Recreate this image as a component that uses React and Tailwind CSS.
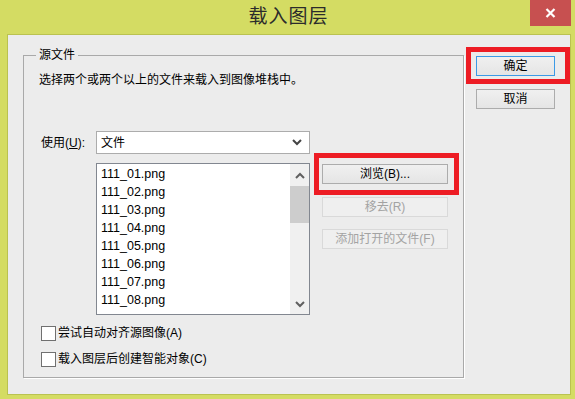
import React from 'react'

const font = "font-['Liberation_Sans','Noto_Sans_CJK_SC',sans-serif]"

function Chevron({ up = false, className = '' }) {
    return (
        <svg width="10" height="7" viewBox="0 0 10 7" className={className}>
            <path d={up ? 'M1 6 L5 2 L9 6' : 'M1 1 L5 5 L9 1'} fill="none" stroke="currentColor" strokeWidth="2" />
        </svg>
    )
}

function Button({ children, disabled = false, primary = false, className = '' }) {
    let tone = 'border-[#acacac] bg-gradient-to-b from-[#f0f0f0] to-[#e5e5e5] text-black'
    if (primary) tone = 'border-[#3c9ae6] bg-gradient-to-b from-[#f0f0f0] to-[#e5e5e5] text-black'
    if (disabled) tone = 'border-[#d9d9d9] bg-[#efefef] text-[#a3a3a3]'
    return (
        <div className={`relative w-[126px] h-[20px] border flex items-center justify-center text-[12px] leading-[14px] ${tone} ${className}`}>
            {children}
        </div>
    )
}

function Check({ children }) {
    return (
        <div className="flex items-center gap-[2px] ml-[2px] h-[15px]">
            <div className="w-[15px] h-[15px] border border-[#707070] bg-white" />
            <span className="text-[12px] leading-[15px] text-black">{children}</span>
        </div>
    )
}

const files = ['111_01.png', '111_02.png', '111_03.png', '111_04.png', '111_05.png', '111_06.png', '111_07.png', '111_08.png']

export default function App() {
    return (
        <div className={`w-[575px] h-[399px] bg-[#d4dc63] flex flex-col ${font}`}>
            {/* Title bar */}
            <div className="h-[34px] relative flex items-center justify-center">
                <span className="text-[19px] leading-[22px] text-[#2b2b2b] tracking-[1px] ml-[2px]">载入图层</span>
                <div className="absolute right-[4px] top-0 w-[41px] h-[26px] bg-[#c75050] flex items-center justify-center">
                    <svg width="11" height="10" viewBox="0 0 11 10">
                        <path d="M1.5 1 L9.5 9 M9.5 1 L1.5 9" stroke="white" strokeWidth="2.2" />
                    </svg>
                </div>
            </div>

            {/* Client */}
            <div className="flex-1 ml-[7px] mr-[4px] mb-[4px] bg-[#ececec] border border-[#bac250] flex pl-[15px] pt-[20px]">
                {/* Group box */}
                <div className="relative w-[441px] h-[323px] border border-[#a9a9a9] shadow-[1px_1px_0_#ffffff] pl-[15px] flex flex-col">
                    <span className="absolute -top-[8px] left-[12px] px-[3px] bg-[#ececec] text-[12px] leading-[14px] text-black">源文件</span>

                    <p className="mt-[16px] text-[12px] leading-[16px] text-black">选择两个或两个以上的文件来载入到图像堆栈中。</p>

                    <div className="mt-[43px] flex items-center">
                        <span className="w-[55px] ml-[2px] text-[12px] leading-[14px] text-black">使用(<span className="underline">U</span>):</span>
                        <div className="w-[214px] h-[23px] border border-[#acacac] bg-white flex items-center justify-between pl-[4px] pr-[7px]">
                            <span className="text-[12px] leading-[14px] text-black">文件</span>
                            <Chevron className="text-[#444]" />
                        </div>
                    </div>

                    <div className="mt-[9px] flex">
                        <div className="ml-[57px] w-[214px] h-[152px] border border-[#828790] bg-white flex">
                            <div className="flex-1 pt-[1px] pl-[4px]">
                                {files.map((f) => (
                                    <div key={f} className="h-[18px] flex items-center text-[12.5px] text-black">{f}</div>
                                ))}
                            </div>
                            <div className="w-[19px] bg-[#f0f0f0] flex flex-col items-center">
                                <div className="h-[22px] flex items-center justify-center text-[#606060]"><Chevron up /></div>
                                <div className="w-full h-[37px] bg-[#cdcdcd]" />
                                <div className="flex-1" />
                                <div className="h-[20px] flex items-center justify-center text-[#606060]"><Chevron /></div>
                            </div>
                        </div>

                        <div className="ml-[12px] mt-[1px] flex flex-col gap-[13px]">
                            <Button>
                                浏览(B)...
                                <div className="absolute -left-[9px] -right-[12px] -top-[12px] -bottom-[12px] border-[5px] border-[#ed1c24]" />
                            </Button>
                            <Button disabled>移去(R)</Button>
                            <Button disabled className="-mt-[1px]">添加打开的文件(F)</Button>
                        </div>
                    </div>

                    <div className="mt-[11px] flex flex-col gap-[11px]">
                        <Check>尝试自动对齐源图像(A)</Check>
                        <Check>载入图层后创建智能对象(C)</Check>
                    </div>
                </div>

                {/* Right buttons */}
                <div className="ml-[12px] mt-[1px] flex flex-col gap-[13px]">
                    <Button primary className="!w-[79px]">
                        确定
                        <div className="absolute -left-[11px] -right-[16px] -top-[10px] -bottom-[9px] border-[5px] border-[#ed1c24]" />
                    </Button>
                    <Button className="!w-[79px]">取消</Button>
                </div>
            </div>
        </div>
    )
}
